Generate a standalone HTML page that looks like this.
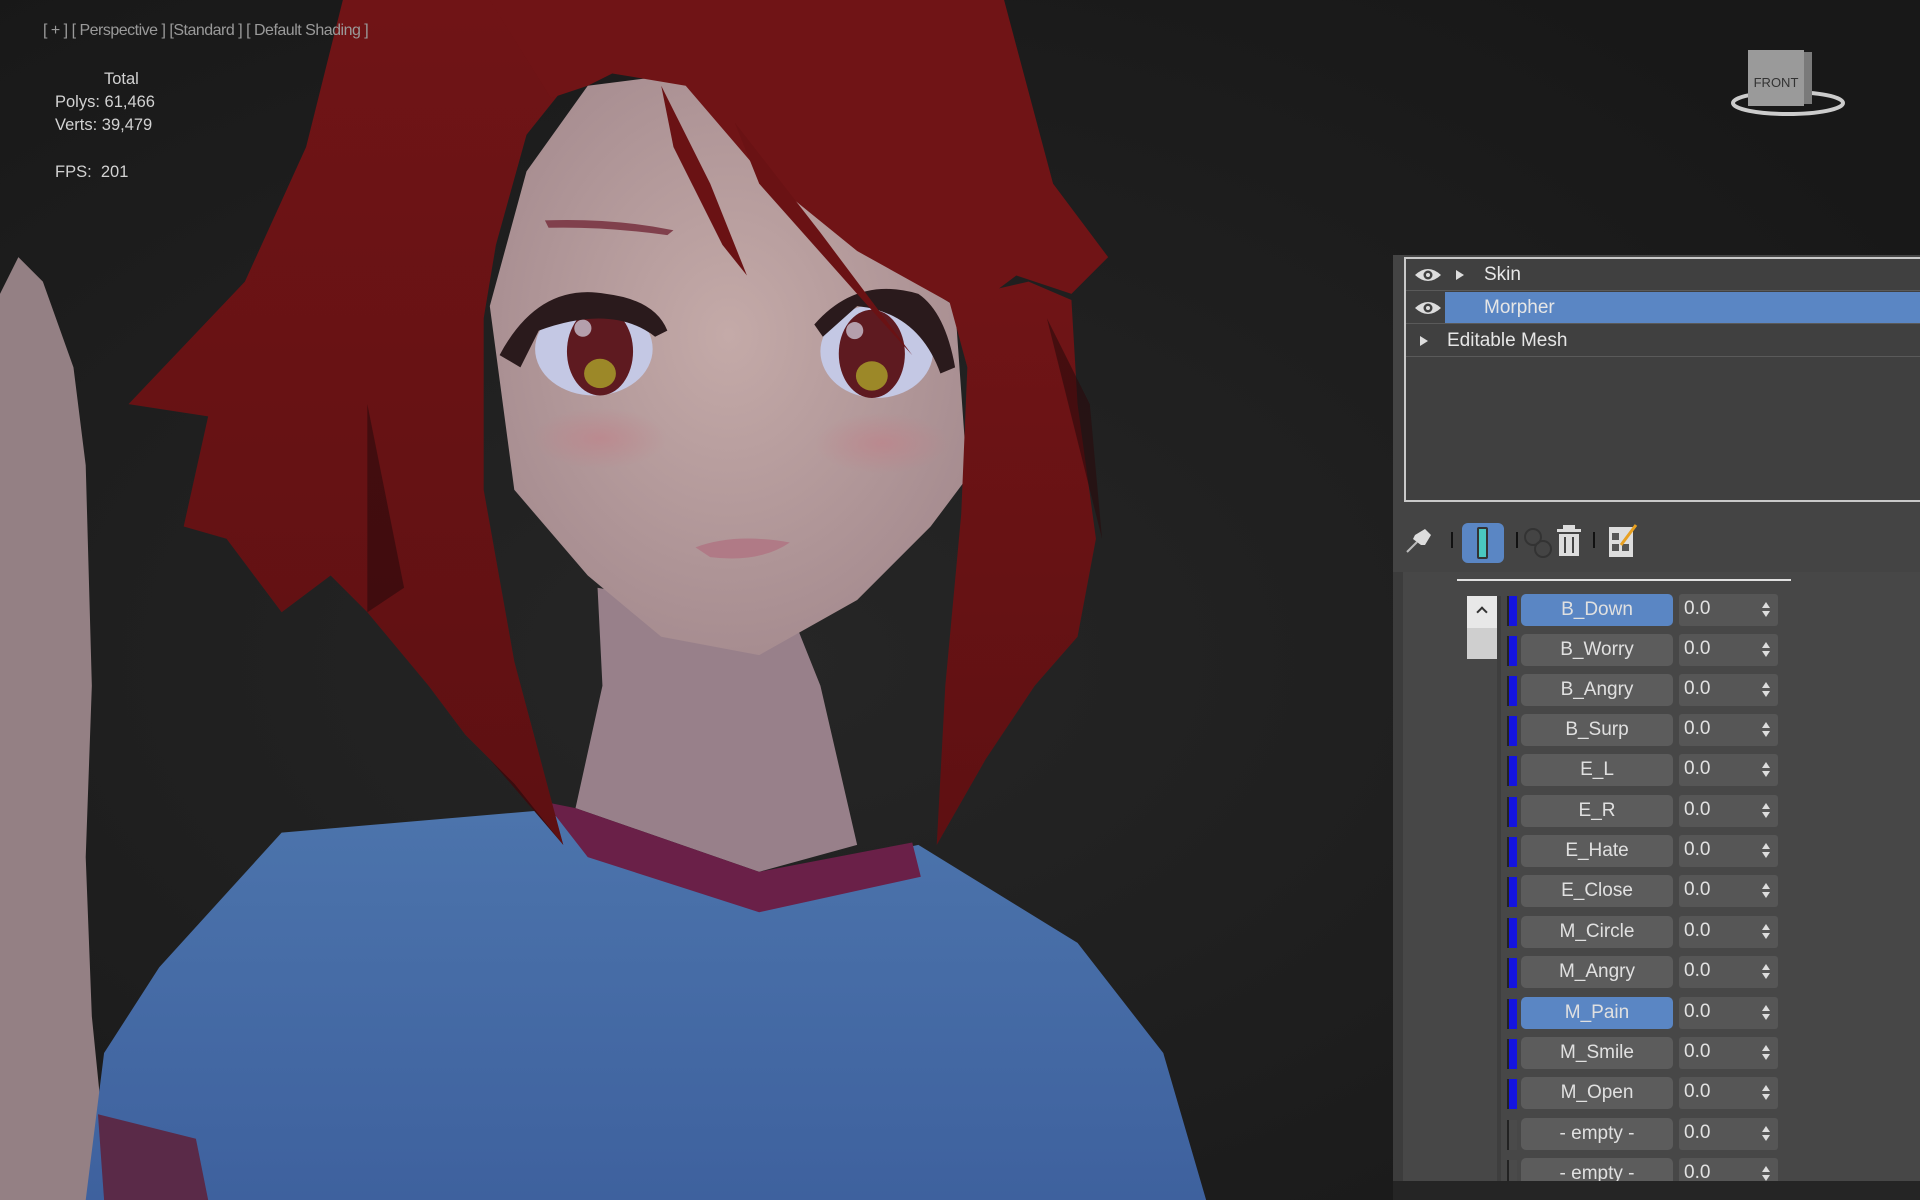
<!DOCTYPE html>
<html><head><meta charset="utf-8">
<style>
html,body{margin:0;padding:0;width:1920px;height:1200px;overflow:hidden;background:#1b1b1b;font-family:"Liberation Sans",sans-serif}
#vp{position:absolute;left:0;top:0}
.lbl{position:absolute;left:43px;top:22px;color:#9a9a9a;font-size:16px;letter-spacing:-0.5px}
.st{position:absolute;color:#d2d2d2;font-size:16.5px;line-height:23px}
#panel{position:absolute;left:1393px;top:255px;width:527px;height:926px;background:#444;overflow:hidden}
#strip{position:absolute;left:1393px;top:1181px;width:527px;height:19px;background:#252525;z-index:5}
#list{position:absolute;left:11px;top:2px;width:516px;height:245px;border:2px solid #c9c9c9;border-right:none;background:#404040;box-sizing:border-box}
.row{position:absolute;left:0;right:0;height:31px;border-bottom:1px solid #5a5a5a;color:#e6e6e6;font-size:19px;line-height:31px}
.sel{background:#5a86c4}
.eye{position:absolute;left:8px;top:8px}
.tri{position:absolute;width:0;height:0;border-left:8px solid #ddd;border-top:5px solid transparent;border-bottom:5px solid transparent}
#tools{position:absolute;left:0;top:260px;width:527px;height:56px}
#lower{position:absolute;left:0;top:317px;width:527px;height:609px;background:#474747}
.mrow{position:absolute;left:0;height:34px}
.bar{position:absolute;left:114px;top:2px;width:8px;height:30px;background:#1414e0;border-left:2px solid #222}
.btn{position:absolute;left:128px;top:0;width:152px;height:32px;border-radius:5px;background:#5c5c5c;color:#e0e0e0;font-size:19px;text-align:center;line-height:32px}
.btn.on{background:#5a86c4}
.val{position:absolute;left:286px;top:0;width:99px;height:32px;background:#565656;border-radius:3px;color:#e2e2e2;font-size:19px;line-height:30px;padding-left:5px;box-sizing:border-box}
.spin{position:absolute;right:8px;top:8px;width:0;height:0;border-left:4px solid transparent;border-right:4px solid transparent;border-bottom:6px solid #ddd}
.spin2{position:absolute;right:8px;top:17px;width:0;height:0;border-left:4px solid transparent;border-right:4px solid transparent;border-top:6px solid #ddd}
</style></head><body>
<svg id="vp" width="1920" height="1200" viewBox="0 0 1568 980" preserveAspectRatio="none">
<defs>
<radialGradient id="bg" cx="0.4" cy="0.55" r="0.7"><stop offset="0" stop-color="#262626"/><stop offset="1" stop-color="#181818"/></radialGradient>
<radialGradient id="face" cx="0.5" cy="0.45" r="0.6"><stop offset="0" stop-color="#c4aaa8"/><stop offset="1" stop-color="#a48a8e"/></radialGradient>
<linearGradient id="shirt" x1="0" y1="0" x2="0" y2="1"><stop offset="0" stop-color="#4c74ac"/><stop offset="1" stop-color="#3e619e"/></linearGradient>
<linearGradient id="hair" x1="0" y1="0" x2="0" y2="1"><stop offset="0" stop-color="#701416"/><stop offset="1" stop-color="#5e1012"/></linearGradient>
<radialGradient id="blush" cx="0.5" cy="0.5" r="0.5"><stop offset="0" stop-color="#c08088" stop-opacity="0.6"/><stop offset="1" stop-color="#c08088" stop-opacity="0"/></radialGradient>
</defs>
<rect width="1568" height="980" fill="url(#bg)"/>
<!-- hand -->
<path d="M0 240 L15 210 L35 230 L60 300 L70 380 L75 560 L70 700 L75 830 L90 980 L0 980 Z" fill="#948084"/>
<!-- shirt -->
<path d="M70 980 L85 860 L130 790 L230 680 L440 662 L620 718 L750 690 L880 770 L950 860 L985 980 Z" fill="url(#shirt)"/>
<path d="M80 910 L160 930 L170 980 L85 980 Z" fill="#5a2a48"/>
<!-- neck -->
<path d="M488 480 L650 510 L670 560 L700 690 L620 712 L470 660 L492 560 Z" fill="#98808a"/>
<path d="M445 655 L480 700 L620 745 L752 716 L745 688 L620 712 L470 660 Z" fill="#6a2048"/>
<!-- back hair dark -->
<path d="M350 550 L420 560 L460 690 L400 620 Z" fill="#3a0c0e"/>
<!-- face -->
<path d="M400 250 L430 140 L480 70 L560 60 L700 200 L780 250 L790 390 L760 430 L700 490 L620 535 L540 520 L480 470 L420 400 Z" fill="url(#face)"/>
<path d="M305 320 L330 300 L345 300 L345 400 L320 380 Z" fill="#b09498"/>
<ellipse cx="490" cy="358" rx="55" ry="25" fill="url(#blush)"/>
<ellipse cx="720" cy="362" rx="55" ry="25" fill="url(#blush)"/>
<!-- eyes -->
<ellipse cx="485" cy="285" rx="48" ry="38" fill="#c4c8e4"/>
<ellipse cx="490" cy="287" rx="27" ry="36" fill="#5e1a20"/>
<ellipse cx="490" cy="305" rx="13" ry="12" fill="#9c8828"/>
<circle cx="476" cy="268" r="7" fill="#d8d8e8" opacity="0.7"/>
<path d="M408 290 Q440 230 495 240 Q535 245 545 270 L535 275 Q500 248 440 270 L425 300 Z" fill="#2a1a1c"/>
<ellipse cx="716" cy="287" rx="46" ry="38" fill="#c4c8e4"/>
<ellipse cx="712" cy="289" rx="27" ry="36" fill="#5e1a20"/>
<ellipse cx="712" cy="307" rx="13" ry="12" fill="#9c8828"/>
<circle cx="698" cy="270" r="7" fill="#d8d8e8" opacity="0.7"/>
<path d="M665 265 Q700 225 750 240 Q772 255 780 300 L768 305 Q750 255 700 250 L672 275 Z" fill="#2a1a1c"/>
<path d="M445 180 Q500 178 550 188 L545 192 Q495 185 448 186 Z" fill="#80404c"/>
<path d="M568 447 Q600 435 645 443 Q620 460 580 455 Z" fill="#b07a86"/>
<!-- left hair -->
<path d="M280 0 L420 0 L470 60 L430 110 L405 200 L395 260 L395 400 L420 540 L460 690 L420 640 L380 600 L350 560 L300 500 L270 470 L230 500 L185 440 L150 430 L170 340 L105 330 L200 230 L250 120 Z" fill="url(#hair)"/>
<path d="M300 330 L330 480 L300 500 Z" fill="#2a0a0c" opacity="0.6"/>
<!-- top hair -->
<path d="M400 0 L820 0 L860 150 L905 210 L875 240 L830 225 L790 255 L700 205 L620 140 L560 70 L500 60 L480 70 L450 80 Z" fill="#701416"/>
<path d="M540 70 L580 150 L610 225 L590 200 L550 120 Z" fill="#6a1214"/>
<path d="M600 100 L670 190 L745 290 L700 240 L620 150 Z" fill="#6a1214"/>
<!-- right hair -->
<path d="M775 245 L840 230 L875 245 L880 330 L895 440 L880 520 L845 560 L805 620 L765 690 L772 560 L785 420 L790 300 Z" fill="url(#hair)"/>
<path d="M855 260 L890 330 L900 440 L885 380 Z" fill="#2a0a0c" opacity="0.6"/>
</svg>
<div class="lbl">[ + ] [ Perspective ] [Standard ] [ Default Shading ]</div>
<div class="st" style="left:104px;top:68px">Total</div>
<div class="st" style="left:55px;top:91px">Polys: 61,466</div>
<div class="st" style="left:55px;top:114px">Verts: 39,479</div>
<div class="st" style="left:55px;top:161px">FPS:&nbsp; 201</div>
<svg style="position:absolute;left:1710px;top:40px" width="160" height="90">
<ellipse cx="78" cy="63" rx="55" ry="11" fill="none" stroke="#ccc" stroke-width="4"/>
<rect x="38" y="10" width="56" height="56" fill="#9a9a9a"/>
<rect x="94" y="12" width="8" height="52" fill="#7a7a7a"/>
<text x="66" y="47" font-family="Liberation Sans" font-size="13" fill="#333" text-anchor="middle">FRONT</text>
</svg>
<div id="panel">
<div id="list">
 <div class="row" style="top:0">
  <svg class="eye" width="28" height="16"><path d="M1 8 Q14 -4 27 8 Q14 20 1 8Z" fill="#ddd"/><circle cx="14" cy="8" r="4.5" fill="#404040"/><circle cx="14" cy="8" r="2" fill="#ddd"/></svg>
  <div class="tri" style="left:50px;top:11px"></div>
  <span style="position:absolute;left:78px">Skin</span></div>
 <div class="row" style="top:33px"><div class="sel" style="position:absolute;left:39px;right:0;top:0;height:31px"></div>
  <svg class="eye" width="28" height="16"><path d="M1 8 Q14 -4 27 8 Q14 20 1 8Z" fill="#ddd"/><circle cx="14" cy="8" r="4.5" fill="#404040"/><circle cx="14" cy="8" r="2" fill="#ddd"/></svg>
  <span style="position:absolute;left:78px">Morpher</span></div>
 <div class="row" style="top:66px"><div class="tri" style="left:14px;top:11px"></div><span style="position:absolute;left:41px">Editable Mesh</span></div>
</div>
<div id="tools">
 <svg width="300" height="56">
  <path d="M14 37 L24 27" stroke="#bbb" stroke-width="2"/><path d="M22 20 L32 14 L38 20 L32 30 L28 30 L20 24 Z" fill="#ddd"/>
  <rect x="58" y="17" width="2" height="16" fill="#111"/>
  <rect x="69" y="8" width="42" height="40" rx="6" fill="#5a86c4"/>
  <rect x="84" y="12" width="11" height="32" rx="2" fill="#333"/><rect x="86" y="14" width="7" height="28" fill="#4ac8c0"/>
  <rect x="123" y="17" width="2" height="16" fill="#111"/>
  <circle cx="140" cy="22" r="8" fill="none" stroke="#333" stroke-width="2"/><circle cx="150" cy="34" r="8" fill="none" stroke="#333" stroke-width="2"/>
  <rect x="164" y="14" width="24" height="3" fill="#ddd"/><rect x="170" y="10" width="12" height="4" fill="#ddd"/>
  <rect x="166" y="19" width="20" height="22" fill="#ddd"/><rect x="171" y="22" width="2" height="16" fill="#444"/><rect x="179" y="22" width="2" height="16" fill="#444"/>
  <rect x="200" y="17" width="2" height="16" fill="#111"/>
  <rect x="216" y="12" width="24" height="30" fill="#ddd"/><rect x="219" y="18" width="7" height="7" fill="#555"/><rect x="219" y="29" width="7" height="7" fill="#555"/><rect x="229" y="29" width="7" height="7" fill="#555"/>
  <path d="M228 30 L243 10" stroke="#e8a020" stroke-width="3"/>
 </svg>
</div>
<div id="lower">
 <div style="position:absolute;left:64px;top:7px;width:334px;height:2px;background:#e0e0e0"></div>
 <div style="position:absolute;left:0;top:0;width:10px;height:609px;background:#3c3c3c"></div>
 <div style="position:absolute;left:74px;top:24px;width:31px;height:63px;background:#e8e8e8"><div style="position:absolute;left:0;top:32px;width:31px;height:31px;background:#cfcfcf"></div><div style="position:absolute;left:11px;top:12px;width:6px;height:6px;border-left:2px solid #333;border-top:2px solid #333;transform:rotate(45deg)"></div></div>
 <div style="position:absolute;left:104px;top:24px;width:4px;height:585px;background:#3e3e3e"></div>
</div>
<div class="mrow" style="top:339px"><div class="bar"></div><div class="btn on">B_Down</div><div class="val">0.0<div class="spin"></div><div class="spin2"></div></div></div>
<div class="mrow" style="top:379px"><div class="bar"></div><div class="btn">B_Worry</div><div class="val">0.0<div class="spin"></div><div class="spin2"></div></div></div>
<div class="mrow" style="top:419px"><div class="bar"></div><div class="btn">B_Angry</div><div class="val">0.0<div class="spin"></div><div class="spin2"></div></div></div>
<div class="mrow" style="top:459px"><div class="bar"></div><div class="btn">B_Surp</div><div class="val">0.0<div class="spin"></div><div class="spin2"></div></div></div>
<div class="mrow" style="top:499px"><div class="bar"></div><div class="btn">E_L</div><div class="val">0.0<div class="spin"></div><div class="spin2"></div></div></div>
<div class="mrow" style="top:540px"><div class="bar"></div><div class="btn">E_R</div><div class="val">0.0<div class="spin"></div><div class="spin2"></div></div></div>
<div class="mrow" style="top:580px"><div class="bar"></div><div class="btn">E_Hate</div><div class="val">0.0<div class="spin"></div><div class="spin2"></div></div></div>
<div class="mrow" style="top:620px"><div class="bar"></div><div class="btn">E_Close</div><div class="val">0.0<div class="spin"></div><div class="spin2"></div></div></div>
<div class="mrow" style="top:661px"><div class="bar"></div><div class="btn">M_Circle</div><div class="val">0.0<div class="spin"></div><div class="spin2"></div></div></div>
<div class="mrow" style="top:701px"><div class="bar"></div><div class="btn">M_Angry</div><div class="val">0.0<div class="spin"></div><div class="spin2"></div></div></div>
<div class="mrow" style="top:742px"><div class="bar"></div><div class="btn on">M_Pain</div><div class="val">0.0<div class="spin"></div><div class="spin2"></div></div></div>
<div class="mrow" style="top:782px"><div class="bar"></div><div class="btn">M_Smile</div><div class="val">0.0<div class="spin"></div><div class="spin2"></div></div></div>
<div class="mrow" style="top:822px"><div class="bar"></div><div class="btn">M_Open</div><div class="val">0.0<div class="spin"></div><div class="spin2"></div></div></div>
<div class="mrow" style="top:863px"><div class="bar" style="background:#4a4a4a"></div><div class="btn">- empty -</div><div class="val">0.0<div class="spin"></div><div class="spin2"></div></div></div>
<div class="mrow" style="top:903px"><div class="bar" style="background:#4a4a4a"></div><div class="btn">- empty -</div><div class="val">0.0<div class="spin"></div><div class="spin2"></div></div></div>
</div>
<div id="strip"></div>
</body></html>
